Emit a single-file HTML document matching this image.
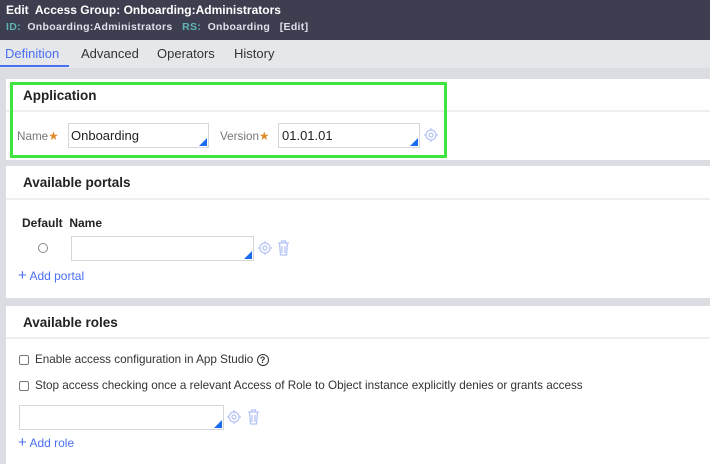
<!DOCTYPE html>
<html><head><meta charset="utf-8"><style>
*{box-sizing:border-box;margin:0;padding:0}
body{width:710px;height:464px;overflow:hidden;background:#dcdde2;font-family:"Liberation Sans","DejaVu Sans",sans-serif;position:relative;color:#222}
.a{position:absolute}
.hdr{left:0;top:0;width:710px;height:40px;background:#3d3f51}
.tabs{left:0;top:40px;width:710px;height:28px;background:#e6e7ea;font-size:13px;color:#333}
.panel{background:#fff;left:6px;width:704px}
.line{height:2px;background:#eceef2;left:6px;width:704px}
.h{font-weight:bold;font-size:13.5px;color:#222}
.inp{background:#fff;border:1px solid #d4d6dc;height:25px}
.inp:after{content:"";position:absolute;right:1px;bottom:1px;border-left:8px solid transparent;border-bottom:8px solid #1a6cf0}
.blue{color:#4a6ff0;font-size:12px}
.cb{width:10px;height:10px;border:1px solid #777;border-radius:2px;background:#fff}
.lbl{font-size:11.7px;color:#333}
</style></head><body>
<div class="a hdr">
 <div class="a" style="left:6px;top:3px;color:#fff;font-weight:bold;font-size:12px">Edit&nbsp; Access Group: Onboarding:Administrators</div>
 <div class="a" style="left:6px;top:21px;font-weight:bold;font-size:10.5px;letter-spacing:0.3px;color:#dfe0ea;white-space:nowrap"><span style="color:#5fb3b3">ID:</span>&nbsp; Onboarding:Administrators&nbsp;&nbsp; <span style="color:#5fb3b3">RS:</span>&nbsp; Onboarding&nbsp;&nbsp; [Edit]</div>
</div>
<div class="a tabs">
 <div class="a" style="left:5px;top:6px;color:#4a6ff0">Definition</div>
 <div class="a" style="left:0;top:25px;width:69px;height:2px;background:#4a6ff0"></div>
 <div class="a" style="left:81px;top:6px">Advanced</div>
 <div class="a" style="left:157px;top:6px">Operators</div>
 <div class="a" style="left:234px;top:6px">History</div>
</div>
<div class="a" style="left:0;top:68px;width:710px;height:10px;background:#dcdde2"></div>

<div class="a panel" style="top:79px;height:81px"></div>
<div class="a line" style="top:110px"></div>
<div class="a h" style="left:23px;top:88px">Application</div>
<div class="a lbl" style="left:17px;top:129px;color:#777">Name<span style="color:#e08a2a">★</span></div>
<div class="a inp" style="left:68px;top:123px;width:141px"></div>
<div class="a" style="left:71px;top:128px;font-size:13px">Onboarding</div>
<div class="a lbl" style="left:220px;top:129px;color:#777">Version<span style="color:#e08a2a">★</span></div>
<div class="a inp" style="left:278px;top:123px;width:142px"></div>
<div class="a" style="left:282px;top:128px;font-size:13px">01.01.01</div>
<svg class="a" style="left:424px;top:128px" width="14" height="14" viewBox="0 0 14 14" fill="none" stroke="#b5c3f5" stroke-width="1.2"><circle cx="7" cy="7" r="5"/><circle cx="7" cy="7" r="2"/><path d="M7 0v2M7 12v2M0 7h2M12 7h2"/></svg>
<div class="a" style="left:10px;top:82px;width:437px;height:76px;border:3px solid #3fe53f"></div>

<div class="a panel" style="top:166px;height:132px"></div>
<div class="a line" style="top:198px"></div>
<div class="a h" style="left:23px;top:175px">Available portals</div>
<div class="a" style="left:22px;top:216px;font-weight:bold;font-size:12px">Default&nbsp; Name</div>
<div class="a" style="left:38px;top:243px;width:10px;height:10px;border:1px solid #888;border-radius:50%"></div>
<div class="a inp" style="left:71px;top:236px;width:183px"></div>
<svg class="a" style="left:258px;top:241px" width="14" height="14" viewBox="0 0 14 14" fill="none" stroke="#b5c3f5" stroke-width="1.2"><circle cx="7" cy="7" r="5"/><circle cx="7" cy="7" r="2"/><path d="M7 0v2M7 12v2M0 7h2M12 7h2"/></svg>
<svg class="a" style="left:277px;top:240px" width="13" height="16" viewBox="0 0 13 16" fill="none" stroke="#b5c3f5" stroke-width="1.3"><path d="M1 3h11M4.5 3V1h4v2M2.5 3l1 12h6l1-12M5 6v7M8 6v7"/></svg>
<div class="a blue" style="left:18px;top:269px"><span style="font-size:15px;line-height:10px">+</span> Add portal</div>

<div class="a panel" style="top:306px;height:158px"></div>
<div class="a line" style="top:337px"></div>
<div class="a h" style="left:23px;top:315px">Available roles</div>
<div class="a cb" style="left:19px;top:355px"></div>
<div class="a lbl" style="left:35px;top:353px">Enable access configuration in App Studio <span style="display:inline-block;width:12px;height:12px;border:1.3px solid #333;border-radius:50%;font-size:9px;text-align:center;line-height:10px;font-weight:bold">?</span></div>
<div class="a cb" style="left:19px;top:381px"></div>
<div class="a lbl" style="left:35px;top:379px">Stop access checking once a relevant Access of Role to Object instance explicitly denies or grants access</div>
<div class="a inp" style="left:19px;top:405px;width:205px"></div>
<svg class="a" style="left:227px;top:410px" width="14" height="14" viewBox="0 0 14 14" fill="none" stroke="#b5c3f5" stroke-width="1.2"><circle cx="7" cy="7" r="5"/><circle cx="7" cy="7" r="2"/><path d="M7 0v2M7 12v2M0 7h2M12 7h2"/></svg>
<svg class="a" style="left:247px;top:409px" width="13" height="16" viewBox="0 0 13 16" fill="none" stroke="#b5c3f5" stroke-width="1.3"><path d="M1 3h11M4.5 3V1h4v2M2.5 3l1 12h6l1-12M5 6v7M8 6v7"/></svg>
<div class="a blue" style="left:18px;top:436px"><span style="font-size:15px;line-height:10px">+</span> Add role</div>
</body></html>
